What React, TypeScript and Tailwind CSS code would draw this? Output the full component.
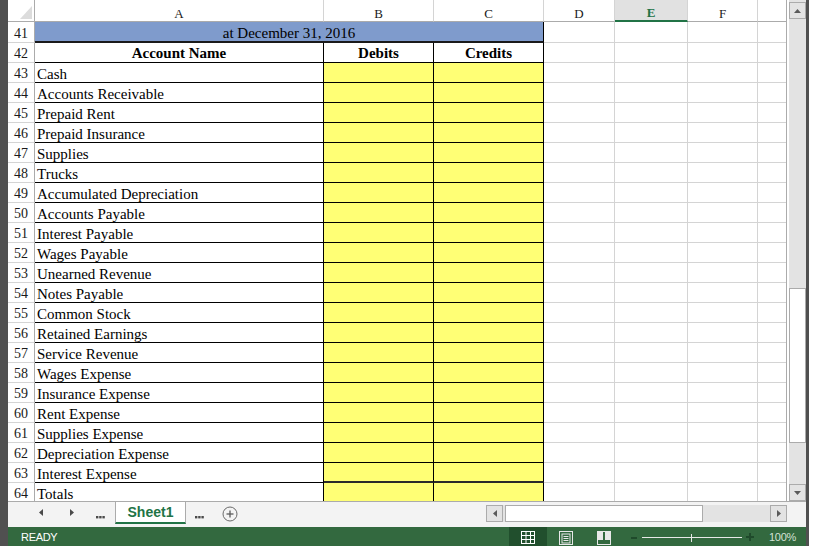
import React from 'react';

const accounts = [
  'Cash',
  'Accounts Receivable',
  'Prepaid Rent',
  'Prepaid Insurance',
  'Supplies',
  'Trucks',
  'Accumulated Depreciation',
  'Accounts Payable',
  'Interest Payable',
  'Wages Payable',
  'Unearned Revenue',
  'Notes Payable',
  'Common Stock',
  'Retained Earnings',
  'Service Revenue',
  'Wages Expense',
  'Insurance Expense',
  'Rent Expense',
  'Supplies Expense',
  'Depreciation Expense',
  'Interest Expense',
  'Totals',
];

function RowNum({ n }: { n: number }) {
  return (
    <div className="flex items-end justify-center border-r border-b border-r-[#ababab] border-b-[#d4d4d4] text-[14px] leading-[17px] text-[#1a1a1a]">
      {n}
    </div>
  );
}

function EmptyCells() {
  return (
    <>
      <div className="border-r border-b border-[#d4d4d4]" />
      <div className="border-r border-b border-[#d4d4d4]" />
      <div className="border-r border-b border-[#d4d4d4]" />
      <div className="border-b border-[#d4d4d4]" />
    </>
  );
}

function ColHead({ label }: { label: string }) {
  return (
    <div className="flex items-end justify-center border-r border-b border-r-[#d4d4d4] border-b-[#ababab] text-[13px] leading-[15px] text-[#1a1a1a]">
      {label}
    </div>
  );
}

function Dots() {
  return (
    <svg width="9" height="3" viewBox="0 0 9 3">
      <rect x="0" y="0" width="2.4" height="2.4" fill="#4a4a4a" />
      <rect x="3.2" y="0" width="2.4" height="2.4" fill="#4a4a4a" />
      <rect x="6.4" y="0" width="2.4" height="2.4" fill="#4a4a4a" />
    </svg>
  );
}

function Sheet() {
  return (
    <div className="grid w-[779px] h-[501px] overflow-hidden border-r border-[#ababab] grid-cols-[27px_289px_110px_110px_71px_73px_70px_28px] grid-rows-[22px_21px] auto-rows-[20px] font-['Liberation_Serif','Times_New_Roman',serif] text-black">
      {/* column headers */}
      <div className="flex items-end justify-end pr-[2px] pb-[2px] border-r border-b border-[#ababab]">
        <svg width="12" height="13" viewBox="0 0 12 13">
          <polygon points="12,0 12,13 0,13" fill="#dcdcdc" />
        </svg>
      </div>
      <ColHead label="A" />
      <ColHead label="B" />
      <ColHead label="C" />
      <ColHead label="D" />
      <div className="flex items-end justify-center bg-[#e1e1e1] border-r border-b-2 border-r-[#d4d4d4] border-b-[#217346] text-[13px] leading-[14px] font-bold text-[#217346]">
        E
      </div>
      <ColHead label="F" />
      <div className="border-b border-[#ababab]" />

      {/* row 41 */}
      <RowNum n={41} />
      <div className="col-span-3 flex items-end justify-center bg-[#7f9bcc] border-r border-b-2 border-r-black border-b-[#1a1a1a] text-[15px] leading-[16px]">
        at December 31, 2016
      </div>
      <EmptyCells />

      {/* row 42 */}
      <RowNum n={42} />
      <div className="flex items-end justify-center border-r border-b border-black text-[15px] leading-[17px] font-bold">
        Account Name
      </div>
      <div className="flex items-end justify-center border-r border-b border-black text-[15px] leading-[17px] font-bold">
        Debits
      </div>
      <div className="flex items-end justify-center border-r border-b border-black text-[15px] leading-[17px] font-bold">
        Credits
      </div>
      <EmptyCells />

      {accounts.map((name, i) => {
        const n = 43 + i;
        const thick = n === 63;
        return (
          <React.Fragment key={n}>
            <RowNum n={n} />
            <div className="flex items-end pl-[2px] border-r border-b border-black text-[15px] leading-[16px] whitespace-nowrap">
              {name}
            </div>
            <div
              className={
                thick
                  ? 'bg-[#ffff75] border-r border-b-2 border-r-black border-b-[#2a2a2a]'
                  : 'bg-[#ffff75] border-r border-b border-black'
              }
            />
            <div
              className={
                thick
                  ? 'bg-[#ffff75] border-r border-b-2 border-r-black border-b-[#2a2a2a]'
                  : 'bg-[#ffff75] border-r border-b border-black'
              }
            />
            <EmptyCells />
          </React.Fragment>
        );
      })}
    </div>
  );
}

function VScroll() {
  return (
    <div className="ml-[2px] w-[17px] h-[501px] bg-[#e3e3e3] flex flex-col">
      <div className="mt-[2px] h-[17px] border border-[#ababab] flex items-center justify-center">
        <svg width="7" height="4" viewBox="0 0 7 4">
          <polygon points="3.5,0 7,4 0,4" fill="#5a5a5a" />
        </svg>
      </div>
      <div className="mt-[269px] h-[155px] bg-white border border-[#ababab]" />
      <div className="mt-[41px] h-[17px] border border-[#ababab] flex items-center justify-center">
        <svg width="7" height="4" viewBox="0 0 7 4">
          <polygon points="0,0 7,0 3.5,4" fill="#5a5a5a" />
        </svg>
      </div>
    </div>
  );
}

function TabBar() {
  return (
    <div className="h-[30px] flex items-center bg-[#f3f3f3] border-t border-[#ababab] font-['Liberation_Sans',Arial,sans-serif]">
      <svg className="ml-[31px] mt-[-4px]" width="4" height="7" viewBox="0 0 4 7">
        <polygon points="4,0 4,7 0,3.5" fill="#4a4a4a" />
      </svg>
      <svg className="ml-[27px] mt-[-4px]" width="4" height="7" viewBox="0 0 4 7">
        <polygon points="0,0 0,7 4,3.5" fill="#4a4a4a" />
      </svg>
      <div className="ml-[22px] mt-[6px]">
        <Dots />
      </div>
      <div className="ml-[10px] self-start w-[71px] h-[22px] bg-white border-l border-r border-b-2 border-l-[#ababab] border-r-[#ababab] border-b-[#217346] flex items-center justify-center text-[14px] font-bold text-[#217346]">
        Sheet1
      </div>
      <div className="ml-[9px] mt-[6px]">
        <Dots />
      </div>
      <svg className="ml-[18px] mt-[-2px]" width="16" height="16" viewBox="0 0 16 16">
        <circle cx="8" cy="8" r="7" fill="none" stroke="#6a6a6a" strokeWidth="1" />
        <line x1="8" y1="4.5" x2="8" y2="11.5" stroke="#5a5a5a" strokeWidth="1.3" />
        <line x1="4.5" y1="8" x2="11.5" y2="8" stroke="#5a5a5a" strokeWidth="1.3" />
      </svg>

      {/* horizontal scrollbar */}
      <div className="ml-auto mr-[19px] mt-[-2px] flex h-[17px] bg-[#e3e3e3]">
        <div className="w-[17px] h-[17px] border border-[#ababab] flex items-center justify-center">
          <svg width="4" height="7" viewBox="0 0 4 7">
            <polygon points="4,0 4,7 0,3.5" fill="#5a5a5a" />
          </svg>
        </div>
        <div className="ml-[2px] w-[198px] h-[17px] bg-white border border-[#ababab]" />
        <div className="w-[67px]" />
        <div className="w-[17px] h-[17px] border border-[#ababab] flex items-center justify-center">
          <svg width="4" height="7" viewBox="0 0 4 7">
            <polygon points="0,0 0,7 4,3.5" fill="#5a5a5a" />
          </svg>
        </div>
      </div>
    </div>
  );
}

function StatusBar() {
  return (
    <div className="h-[22px] flex items-stretch bg-[#33693f] font-['Liberation_Sans',Arial,sans-serif]">
      <div className="w-[501px] pl-[13px] pt-[4px] text-[11px] leading-[13px] tracking-[-0.3px] text-white">
        READY
      </div>
      <div className="w-[38px] bg-[#214f2d] flex justify-center pt-[4px]">
        <svg width="14" height="13" viewBox="0 0 14 13">
          <rect x="0.5" y="0.5" width="13" height="12" fill="none" stroke="#ffffff" strokeWidth="1" />
          <line x1="5" y1="0.5" x2="5" y2="12.5" stroke="#ffffff" strokeWidth="1" />
          <line x1="9.5" y1="0.5" x2="9.5" y2="12.5" stroke="#ffffff" strokeWidth="1" />
          <line x1="0.5" y1="4.5" x2="13.5" y2="4.5" stroke="#ffffff" strokeWidth="1" />
          <line x1="0.5" y1="8.5" x2="13.5" y2="8.5" stroke="#ffffff" strokeWidth="1" />
        </svg>
      </div>
      <div className="ml-[12px] pt-[4px]">
        <svg width="14" height="14" viewBox="0 0 14 14">
          <rect x="0.5" y="0.5" width="13" height="13" fill="none" stroke="#e8e8e8" strokeWidth="1" />
          <rect x="3" y="3" width="8" height="9" fill="none" stroke="#e8e8e8" strokeWidth="1" />
          <line x1="4.5" y1="5.5" x2="9.5" y2="5.5" stroke="#e8e8e8" strokeWidth="1" />
          <line x1="4.5" y1="7.5" x2="9.5" y2="7.5" stroke="#e8e8e8" strokeWidth="1" />
          <line x1="4.5" y1="9.5" x2="9.5" y2="9.5" stroke="#e8e8e8" strokeWidth="1" />
        </svg>
      </div>
      <div className="ml-[24px] pt-[4px]">
        <svg width="14" height="14" viewBox="0 0 14 14">
          <rect x="0.5" y="0.5" width="13" height="13" fill="none" stroke="#e8e8e8" strokeWidth="1" />
          <rect x="1" y="1" width="5" height="8" fill="#e8e8e8" />
          <rect x="8" y="1" width="5" height="8" fill="#e8e8e8" />
        </svg>
      </div>
      <div className="ml-[20px] pt-[10px]">
        <div className="w-[6px] h-[2px] bg-[#1f4a2b]" />
      </div>
      <div className="ml-[5px] w-[100px] pt-[7px] flex flex-col items-center">
        <div className="relative w-[100px] h-[8px]">
          <div className="mt-[3px] h-[1px] w-[100px] bg-[#e8e8e8]" />
          <div className="absolute left-[49px] top-0 w-[1px] h-[8px] bg-[#e8e8e8]" />
        </div>
      </div>
      <div className="ml-[4px] pt-[6px]">
        <svg width="8" height="8" viewBox="0 0 8 8">
          <rect x="0" y="3" width="8" height="2" fill="#1f4a2b" />
          <rect x="3" y="0" width="2" height="8" fill="#1f4a2b" />
        </svg>
      </div>
      <div className="ml-[15px] pt-[4px] text-[11px] leading-[13px] tracking-[-0.3px] text-[#d4e2d6]">100%</div>
    </div>
  );
}

export default function App() {
  return (
    <div className="w-[826px] h-[546px] overflow-hidden bg-white flex">
      <div className="w-[8px] bg-[#505050]" />
      <div className="w-[798px] flex flex-col">
        <div className="flex h-[501px] bg-white">
          <Sheet />
          <VScroll />
        </div>
        <TabBar />
        <StatusBar />
      </div>
      <div className="w-[3px] bg-[#505050]" />
    </div>
  );
}
